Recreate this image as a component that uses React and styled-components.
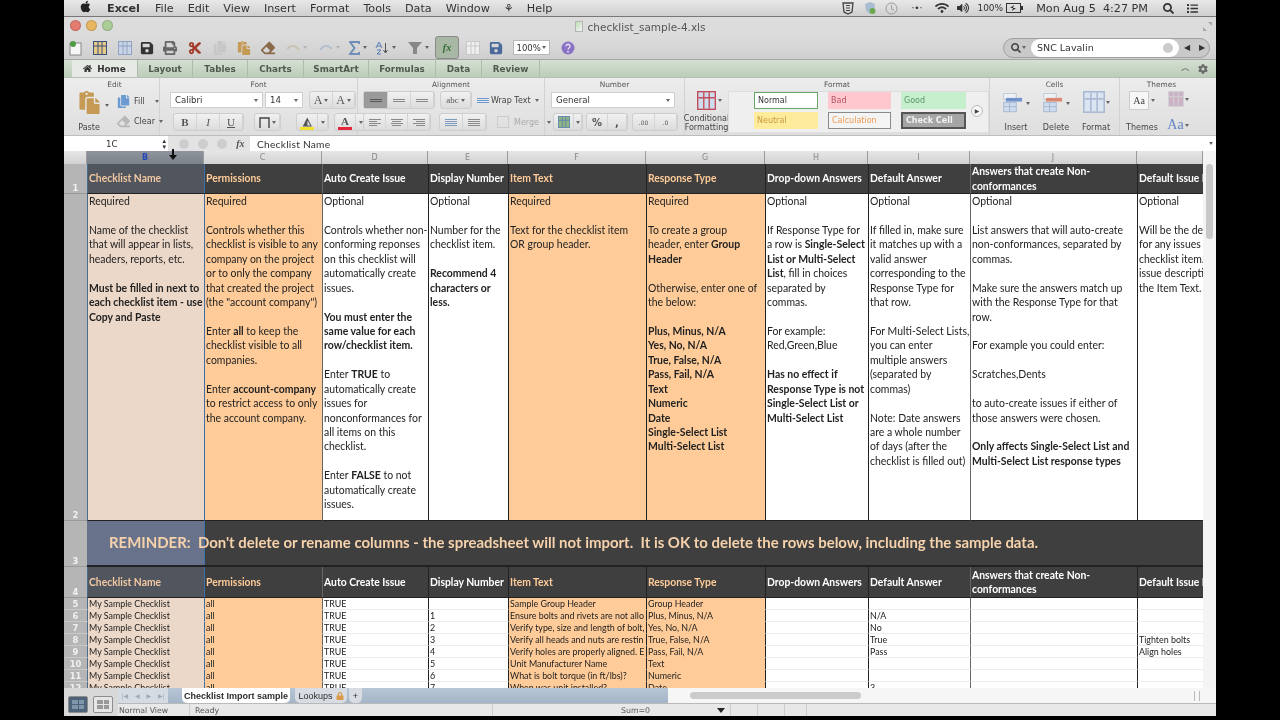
import React from "react";
import styled, { createGlobalStyle } from "styled-components";
import { FaApple, FaHome, FaSave, FaPrint, FaCut, FaCopy, FaPaste, FaCog, FaWifi, FaVolumeUp, FaSearch, FaList, FaLock, FaEraser } from "react-icons/fa";

const GlobalStyle = createGlobalStyle`
  html, body {
    margin: 0;
    height: 100%;
    background: #000;
    overflow: hidden;
  }
`;

const COLUMNS = "23px 117px 118px 106px 80px 138px 119px 103px 102px 167px 66px";
const UI_FONT = `"DejaVu Sans", sans-serif`;
const SHEET_FONT = `Lato, "Open Sans", sans-serif`;

const Page = styled.div`
  display: flex;
  justify-content: center;
  width: 1280px;
  height: 720px;
  background: #000;
`;

const Window = styled.div`
  position: relative;
  display: flex;
  flex-direction: column;
  width: 1152px;
  height: 716px;
  background: #e4e4e4;
  overflow: hidden;
  filter: blur(0.4px);
`;

const MenuBar = styled.div`
  display: flex;
  align-items: center;
  height: 17px;
  flex: none;
  padding-left: 15px;
  background: linear-gradient(#e8e8e8, #cfcfcf);
  border-bottom: 1px solid #777;
  box-sizing: border-box;
  font: 11.2px ${UI_FONT};
  color: #333;
`;

const MenuItem = styled.span`
  margin-right: ${(p) => p.$gap ?? 14}px;
  font-weight: ${(p) => (p.$bold ? 700 : 400)};
  white-space: nowrap;
`;

const MenuRight = styled.div`
  display: flex;
  align-items: center;
  margin-left: auto;
  padding-right: 18px;
  color: #333;
`;

const TitleBar = styled.div`
  position: relative;
  display: flex;
  align-items: center;
  justify-content: center;
  height: 19px;
  flex: none;
  background: #dcdcdc;
  font: 10.5px ${UI_FONT};
  color: #555;
`;

const Lights = styled.div`
  position: absolute;
  left: 6px;
  top: 3px;
  display: flex;
  gap: 5px;
`;

const Light = styled.span`
  width: 11px;
  height: 11px;
  border-radius: 50%;
  background: ${(p) => p.$color};
  border: 1px solid rgba(0, 0, 0, 0.15);
  box-sizing: border-box;
`;

const DocIcon = styled.span`
  width: 8px;
  height: 11px;
  margin-right: 5px;
  background: linear-gradient(135deg, #bfe0b8, #f4f4f4);
  border: 1px solid #b5b5b5;
  box-sizing: border-box;
`;

const ResizeIcon = styled.span`
  position: absolute;
  right: 3px;
  top: 4px;
  display: flex;
`;

const Toolbar = styled.div`
  display: flex;
  align-items: center;
  height: 24px;
  flex: none;
  background: linear-gradient(#dcdcdc, #cfcfcf);
  border-bottom: 1px solid #a5a5a5;
  box-sizing: border-box;
`;

const Tool = styled.div`
  display: flex;
  align-items: center;
  justify-content: center;
  gap: 3px;
  width: ${(p) => p.$w}px;
  flex: none;
  color: ${(p) => p.$color || "#555"};
  opacity: ${(p) => (p.$faded ? 0.3 : 1)};
`;

const FxToggle = styled.div`
  display: flex;
  align-items: center;
  justify-content: center;
  width: 24px;
  height: 21px;
  margin: 0 2px 0 0;
  border: 1px solid #8a8a8a;
  border-radius: 3px;
  background: #a9b8a5;
  font: italic 700 10px "Liberation Serif", serif;
  color: #2f6a33;
`;

const ZoomBox = styled.div`
  display: flex;
  align-items: center;
  justify-content: space-between;
  width: 37px;
  height: 15px;
  padding: 0 3px;
  box-sizing: border-box;
  background: #fff;
  border: 1px solid #b8b8b8;
  font: 8.5px ${UI_FONT};
  color: #333;
`;

const SearchPill = styled.div`
  display: flex;
  align-items: center;
  height: 20px;
  width: 207px;
  margin-left: auto;
  margin-right: 6px;
  padding-left: 7px;
  box-sizing: border-box;
  border: 1px solid #a0a0a0;
  border-radius: 10px;
  background: #c9c9c9;
  color: #444;
`;

const SearchInput = styled.div`
  display: flex;
  align-items: center;
  justify-content: space-between;
  flex: 1;
  height: 18px;
  margin-left: 4px;
  padding: 0 6px;
  box-sizing: border-box;
  border-radius: 9px;
  background: #fff;
  font: 9.5px ${UI_FONT};
  color: #333;
`;

const ClearDot = styled.span`
  width: 10px;
  height: 10px;
  border-radius: 50%;
  background: #ccc;
`;

const PagerArrow = styled.span`
  width: 15px;
  text-align: center;
  font-size: 8px;
  color: #333;
`;

const TabStrip = styled.div`
  display: flex;
  align-items: stretch;
  height: 18px;
  flex: none;
  padding-left: 8px;
  background: linear-gradient(#d5e0d2, #bccdb9);
  border-bottom: 1px solid #b5c2b3;
  box-sizing: border-box;
  font: 700 8.8px ${UI_FONT};
  color: #4e5a4e;
`;

const RibbonTab = styled.div`
  display: flex;
  align-items: center;
  justify-content: center;
  gap: 5px;
  width: ${(p) => p.$w}px;
  flex: none;
  box-sizing: border-box;
  border-right: 1px solid #aebcab;
  background: ${(p) => (p.$active ? "linear-gradient(#e4ebe2,#e8e8e8)" : "transparent")};
  color: ${(p) => (p.$active ? "#333" : "#4e5a4e")};
`;

const StripRight = styled.div`
  display: flex;
  align-items: center;
  gap: 8px;
  margin-left: auto;
  padding-right: 8px;
  color: #6a6a6a;
  font-size: 9px;
`;

const Ribbon = styled.div`
  display: flex;
  height: 58px;
  flex: none;
  padding-left: 6px;
  background: linear-gradient(#ececec, #dedede);
  border-bottom: 1px solid #bdbdbd;
  box-sizing: border-box;
  font: 8px ${UI_FONT};
  color: #444;
`;

const Group = styled.div`
  display: flex;
  flex-direction: column;
  width: ${(p) => p.$w}px;
  flex: none;
  border-right: 1px solid ${(p) => (p.$last ? "transparent" : "#d2d2d2")};
  box-sizing: border-box;
`;

const GroupTitle = styled.div`
  height: 13px;
  line-height: 13px;
  text-align: center;
  font-size: 7.4px;
  color: #555;
`;

const GroupRows = styled.div`
  display: flex;
  flex-direction: column;
  gap: 4px;
  padding-left: ${(p) => p.$pad ?? 0}px;
`;

const GroupColumns = styled.div`
  display: flex;
  gap: ${(p) => p.$gap ?? 0}px;
  padding-left: ${(p) => p.$pad ?? 0}px;
`;

const RibbonRow = styled.div`
  display: flex;
  align-items: center;
  gap: ${(p) => p.$gap ?? 0}px;
  height: 18px;
  padding-left: ${(p) => p.$pad ?? 0}px;
`;

const EditRow = styled.div`
  display: flex;
  height: 41px;
  padding-left: 3px;
`;

const PasteCaret = styled.div`
  display: flex;
  align-items: center;
  margin-top: -12px;
`;

const FillStack = styled.div`
  display: flex;
  flex-direction: column;
  justify-content: space-around;
  margin-left: 8px;
`;

const Combo = styled.div`
  display: flex;
  align-items: center;
  justify-content: space-between;
  width: ${(p) => p.$w}px;
  height: 16px;
  margin-left: ${(p) => p.$ml ?? 0}px;
  padding: 0 4px;
  box-sizing: border-box;
  background: #fff;
  border: 1px solid #cfcfcf;
  color: #333;
  font-size: 8.6px;
`;

const Caret = styled.span`
  width: 0;
  height: 0;
  flex: none;
  margin: 0 ${(p) => p.$m ?? 0}px;
  border-left: 2.5px solid transparent;
  border-right: 2.5px solid transparent;
  border-top: 3px solid #666;
`;

const Segments = styled.div`
  display: flex;
  height: 18px;
  flex: none;
  margin-left: ${(p) => p.$ml ?? 0}px;
  border: 1px solid #cecece;
  border-radius: 3px;
  background: linear-gradient(#f1f1f1, #dcdcdc);
  box-sizing: border-box;
`;

const Segment = styled.div`
  display: flex;
  align-items: center;
  justify-content: center;
  gap: 2px;
  width: ${(p) => p.$w}px;
  border-right: 1px solid #d4d4d4;
  background: ${(p) => (p.$pressed ? "#9a9a9a" : "transparent")};
  color: ${(p) => (p.$muted ? "#aaa" : "#555")};
  font: ${(p) => p.$font || `8.6px ${UI_FONT}`};
`;

const Lines = styled.span`
  display: flex;
  flex-direction: column;
  align-items: ${(p) => p.$align || "center"};
  gap: 1px;
  width: 12px;

  i {
    display: block;
    height: 1px;
    background: ${(p) => p.$color || "#8a8a8a"};
    width: 100%;
  }
  i:nth-child(even) {
    width: ${(p) => (p.$even ? "100%" : "70%")};
  }
`;

const ColorA = styled.span`
  display: flex;
  justify-content: center;
  width: 14px;
  font: 700 11px "Liberation Serif", serif;
  line-height: 12px;
  color: #555;
  border-bottom: 3px solid ${(p) => p.$bar};
`;

const LabelButton = styled.div`
  display: flex;
  align-items: center;
  gap: ${(p) => p.$gap ?? 4}px;
  margin-left: ${(p) => p.$ml ?? 0}px;
  color: ${(p) => (p.$muted ? "#aaa" : "#444")};
`;

const IconColumn = styled.div`
  display: flex;
  flex-direction: column;
  align-items: center;
  justify-content: space-between;
  width: ${(p) => p.$w}px;
  height: 41px;
  flex: none;
  line-height: 9px;
  text-align: center;
  white-space: nowrap;
`;

const IconWithCaret = styled.div`
  display: flex;
  align-items: center;
  gap: ${(p) => p.$gap ?? 1}px;
  padding-left: ${(p) => p.$pad ?? 0}px;
`;

const ThemeSwatch = styled.span`
  padding: 3px;
  background: #f7f7f7;
  border: 1px solid #ccc;
  font: 10px "Liberation Serif", serif;
`;

const ThemeFont = styled.div`
  display: flex;
  align-items: center;
  gap: 1px;
  font: 14px/14px "Liberation Serif", serif;
  color: #5f84c4;
`;

const Gallery = styled.div`
  position: relative;
  display: grid;
  grid-template-columns: 64px 63px 65px;
  grid-template-rows: 17px 17px;
  gap: 3px 10px;
  align-content: start;
  width: 262px;
  height: 41px;
  padding: 0 0 0 25px;
  box-sizing: border-box;
  background: #efefef;
  border: 1px solid #dcdcdc;
  border-bottom: none;
`;

const StyleChip = styled.div`
  display: flex;
  align-items: center;
  padding-left: 3px;
  font-size: 8px;
  box-sizing: border-box;
  background: ${(p) => p.$bg};
  color: ${(p) => p.$fg};
  border: ${(p) => p.$border || "none"};
  font-weight: ${(p) => (p.$bold ? 700 : 400)};
`;

const GalleryArrow = styled.span`
  position: absolute;
  right: 5px;
  top: 13px;
  width: 12px;
  height: 12px;
  border-radius: 50%;
  border: 1px solid #bbb;
  background: #f7f7f7;
  box-sizing: border-box;
  font-size: 6px;
  line-height: 10px;
  text-align: center;
`;

const FormulaBar = styled.div`
  display: flex;
  align-items: center;
  height: 15px;
  flex: none;
  background: #fff;
  font: 9.6px ${UI_FONT};
  color: #333;
`;

const NameBox = styled.div`
  display: flex;
  align-items: center;
  justify-content: space-between;
  width: 104px;
  height: 100%;
  padding: 0 2px 0 42px;
  box-sizing: border-box;
  flex: none;
  font-size: 8.6px;
`;

const Spinner = styled.span`
  font-size: 7px;
  line-height: 6px;
  text-align: center;
`;

const FormulaTools = styled.div`
  display: flex;
  align-items: center;
  justify-content: space-around;
  width: 82px;
  height: 100%;
  flex: none;
  padding: 0 1px 0 7px;
  box-sizing: border-box;
  background: #e3e3e3;
`;

const FormulaDot = styled.span`
  width: 10px;
  height: 10px;
  border-radius: 50%;
  background: #cdcdcd;
`;

const FxLabel = styled.span`
  font: italic 700 10px "Liberation Serif", serif;
  color: #555;
`;

const FormulaText = styled.div`
  flex: 1;
  padding-left: 7px;
  font: 10.2px ${SHEET_FONT};
  letter-spacing: 0.25px;
`;

const Sheet = styled.div`
  display: flex;
  flex: 1;
  min-height: 0;
`;

const Grid = styled.div`
  width: 1139px;
  flex: none;
  overflow: hidden;
  background: #fff;
`;

const Row = styled.div`
  display: grid;
  grid-template-columns: ${COLUMNS};
  height: ${(p) => p.$h}px;
`;

const ColumnHead = styled.div`
  display: flex;
  align-items: center;
  justify-content: center;
  background: ${(p) => (p.$selected ? "linear-gradient(#8f949c,#7c828c)" : "linear-gradient(#e6e6e6,#d2d2d2)")};
  border-right: 1px solid #9b9b9b;
  box-sizing: border-box;
  font: ${(p) => (p.$selected ? 700 : 400)} 8px ${UI_FONT};
  color: ${(p) => (p.$selected ? "#2a49b8" : "#888")};
`;

const RowHead = styled.div`
  display: flex;
  align-items: ${(p) => (p.$center ? "center" : "flex-end")};
  justify-content: center;
  background: #b5b5b5;
  border-bottom: 1px solid ${(p) => (p.$center ? "#c8c8c8" : "#9a9a9a")};
  box-sizing: border-box;
  font: 700 8.4px ${UI_FONT};
  color: #f1f1f1;
`;

const HeadCell = styled.div`
  display: flex;
  align-items: center;
  padding-left: 1px;
  box-sizing: border-box;
  overflow: hidden;
  background: ${(p) => (p.$selected ? "#50555e" : "#3f3f3f")};
  border-left: 1px solid ${(p) => p.$rule || "#222"};
  border-bottom: 1px solid #222;
  font: 700 10.35px/14.4px ${SHEET_FONT};
  color: ${(p) => (p.$orange ? (p.$selected ? "#f2c8a2" : "#fc9") : "#fff")};
  white-space: pre;
`;

const NoteCell = styled.div`
  padding-left: 1px;
  box-sizing: border-box;
  overflow: hidden;
  background: ${(p) => p.$bg};
  border-left: 1px solid ${(p) => p.$rule || "#222"};
  border-bottom: 1px solid #222;
  font: 10.45px/14.45px ${SHEET_FONT};
  color: #222;
  white-space: nowrap;
`;

const NoteLine = styled.div`
  height: 14.45px;
`;

const Reminder = styled.div`
  grid-column: 2 / -1;
  display: flex;
  align-items: center;
  padding: 0 0 2px 22px;
  background: linear-gradient(90deg, #68728a 117px, #3d6fa8 117px, #3d6fa8 118px, #3f3f3f 118px);
  border-bottom: 2px solid #222;
  box-sizing: border-box;
  font: 700 14.94px ${SHEET_FONT};
  color: #f6d2ac;
  white-space: pre;
`;

const DataCell = styled.div`
  padding-left: 1px;
  box-sizing: border-box;
  overflow: hidden;
  background: ${(p) => p.$bg};
  border-left: 1px solid ${(p) => p.$rule || "#222"};
  border-bottom: 1px solid ${(p) => (p.$bg === "#fff" ? "#ececec" : "transparent")};
  font: 8.9px/12px ${SHEET_FONT};
  color: #222;
  white-space: nowrap;
`;

const VScroll = styled.div`
  display: flex;
  flex-direction: column;
  align-items: center;
  flex: 1;
  padding-top: 13px;
  background: #f4f4f4;
`;

const VThumb = styled.div`
  width: 7px;
  height: 75px;
  border-radius: 4px;
  background: #c8c8c8;
`;

const Footer = styled.div`
  display: flex;
  height: 28px;
  flex: none;
  background: #e4e4e4;
  font: 7.8px ${UI_FONT};
  color: #555;
`;

const ViewSwitch = styled.div`
  display: flex;
  align-items: center;
  gap: 5px;
  width: 54px;
  padding: 5px 0 0 4px;
  box-sizing: border-box;
  flex: none;
  background: #d8d8d8;
`;

const ViewButton = styled.div`
  display: grid;
  grid-template-columns: 1fr 1fr;
  gap: 1px;
  width: ${(p) => p.$w}px;
  height: 17px;
  padding: 3px;
  box-sizing: border-box;
  border-radius: 2px;
  background: ${(p) => (p.$active ? "#4e6378" : "#e6e6e6")};
  border: 1px solid #8d8d8d;

  i {
    background: ${(p) => (p.$active ? "#7f95aa" : "#9a9a9a")};
  }
`;

const FooterMain = styled.div`
  display: flex;
  flex-direction: column;
  flex: 1;
  min-width: 0;
`;

const SheetTabs = styled.div`
  display: flex;
  height: 15px;
  flex: none;
`;

const TabRail = styled.div`
  display: flex;
  align-items: center;
  width: 550px;
  flex: none;
  background: linear-gradient(#b7c6d6, #a3b5c7);
`;

const RailNav = styled.div`
  display: flex;
  align-items: center;
  justify-content: space-around;
  width: 50px;
  height: 100%;
  flex: none;
  background: #d4dbe2;
  font-size: 6px;
  color: #a0a8b0;
`;

const SheetTab = styled.div`
  display: flex;
  align-items: center;
  justify-content: center;
  gap: 3px;
  width: ${(p) => p.$w}px;
  height: 100%;
  margin-left: ${(p) => p.$ml ?? 0}px;
  flex: none;
  background: ${(p) => (p.$active ? "#fff" : "#d7dde3")};
  border-radius: 0 0 5px 5px;
  font: ${(p) => (p.$active ? 700 : 400)} 9px "Liberation Sans", sans-serif;
  color: #2e2e2e;
  white-space: nowrap;
`;

const HScroll = styled.div`
  display: flex;
  align-items: center;
  flex: 1;
  padding: 0 16px 0 22px;
  background: #f6f6f6;
`;

const HThumb = styled.div`
  width: 171px;
  height: 7px;
  border-radius: 4px;
  background: #cbcbcb;
`;

const Grip = styled.span`
  width: 4px;
  height: 10px;
  margin-left: auto;
  border-left: 1px solid #bbb;
  border-right: 1px solid #bbb;
`;

const StatusBar = styled.div`
  display: flex;
  align-items: center;
  flex: 1;
  border-top: 1px solid #b9b9b9;
  box-sizing: border-box;
  background: #e8e8e8;
`;

const StatusCell = styled.div`
  display: flex;
  align-items: center;
  justify-content: space-between;
  width: ${(p) => p.$w}px;
  height: 100%;
  padding-left: ${(p) => p.$pad ?? 5}px;
  padding-right: ${(p) => p.$right ?? 0}px;
  flex: none;
  box-sizing: border-box;
  border-right: 1px solid #cdcdcd;
`;

const StatusCaret = styled.span`
  width: 0;
  height: 0;
  border-left: 4px solid transparent;
  border-right: 4px solid transparent;
  border-top: 5px solid #222;
`;

const CursorMark = styled.span`
  position: absolute;
  left: 105px;
  top: 149px;
  display: flex;
`;

const MenuStatus = styled.span`
  display: flex;
  margin-right: ${(p) => p.$gap}px;
  font-size: ${(p) => p.$size || "inherit"};
  white-space: nowrap;
`;

const menuLeft = ["File", "Edit", "View", "Insert", "Format", "Tools", "Data", "Window"];

const ribbonTabs = [
  ["Layout", 55], ["Tables", 55], ["Charts", 56], ["SmartArt", 65], ["Formulas", 67], ["Data", 46], ["Review", 58],
];

const columnLetters = ["B", "C", "D", "E", "F", "G", "H", "I", "J", ""];

const PEACH = "#fc9";
const TINT = "#ecd8c8";
const WHITE = "#fff";
const BLUE_RULE = "#3d6fa8";
const HEAVY_RULE = "#666";

// fill and left rule for each sheet column
const columns = [
  { bg: TINT, rule: "#4a6a92", orange: true, selected: true },
  { bg: PEACH, rule: BLUE_RULE, orange: true },
  { bg: WHITE, rule: HEAVY_RULE },
  { bg: WHITE },
  { bg: PEACH, orange: true },
  { bg: PEACH, orange: true },
  { bg: WHITE },
  { bg: WHITE },
  { bg: WHITE, rule: HEAVY_RULE },
  { bg: WHITE },
];

const headers = [
  "Checklist Name", "Permissions", "Auto Create Issue", "Display Number", "Item Text", "Response Type",
  "Drop-down Answers", "Default Answer", "Answers that create Non-\nconformances", "Default Issue D",
];

const B = ({ children }) => <b>{children}</b>;

const notes = [
  ["Required", "", "Name of the checklist", "that will appear in lists,", "headers, reports, etc.", "",
    <B>Must be filled in next to</B>, <B>each checklist item - use</B>, <B>Copy and Paste</B>],
  ["Required", "", "Controls whether this", "checklist is visible to any", "company on the project", "or to only the company",
    "that created the project", "(the \"account company\")", "", <>Enter <B>all</B> to keep the</>, "checklist visible to all", "companies.", "",
    <>Enter <B>account-company</B></>, "to restrict access to only", "the account company."],
  ["Optional", "", "Controls whether non-", "conforming reponses", "on this checklist will", "automatically create", "issues.", "",
    <B>You must enter the</B>, <B>same value for each</B>, <B>row/checklist item.</B>, "", <>Enter <B>TRUE</B> to</>, "automatically create",
    "issues for", "nonconformances for", "all items on this", "checklist.", "", <>Enter <B>FALSE</B> to not</>, "automatically create", "issues."],
  ["Optional", "", "Number for the", "checklist item.", "", <B>Recommend 4</B>, <B>characters or</B>, <B>less.</B>],
  ["Required", "", "Text for the checklist item", "OR group header."],
  ["Required", "", "To create a group", <>header, enter <B>Group</B></>, <B>Header</B>, "", "Otherwise, enter one of", "the below:", "",
    <B>Plus, Minus, N/A</B>, <B>Yes, No, N/A</B>, <B>True, False, N/A</B>, <B>Pass, Fail, N/A</B>, <B>Text</B>, <B>Numeric</B>, <B>Date</B>,
    <B>Single-Select List</B>, <B>Multi-Select List</B>],
  ["Optional", "", "If Response Type for", <>a row is <B>Single-Select</B></>, <B>List or Multi-Select</B>, <><B>List</B>, fill in choices</>,
    "separated by", "commas.", "", "For example:", "Red,Green,Blue", "", <B>Has no effect if</B>, <B>Response Type is not</B>,
    <B>Single-Select List or</B>, <B>Multi-Select List</B>],
  ["Optional", "", "If filled in, make sure", "it matches up with a", "valid answer", "corresponding to the", "Response Type for", "that row.", "",
    "For Multi-Select Lists,", "you can enter", "multiple answers", "(separated by", "commas)", "", "Note: Date answers", "are a whole number",
    "of days (after the", "checklist is filled out)"],
  ["Optional", "", "List answers that will auto-create", "non-conformances, separated by", "commas.", "", "Make sure the answers match up",
    "with the Response Type for that", "row.", "", "For example you could enter:", "", "Scratches,Dents", "", "to auto-create issues if either of",
    "those answers were chosen.", "", <B>Only affects Single-Select List and</B>, <B>Multi-Select List response types</B>],
  ["Optional", "", "Will be the de", "for any issues", "checklist item.", "issue descripti", "the Item Text."],
];

const dataRows = [
  [5, "", "Sample Group Header", "Group Header", "", ""],
  [6, "1", "Ensure bolts and rivets are not allo", "Plus, Minus, N/A", "N/A", ""],
  [7, "2", "Verify type, size and length of bolt,", "Yes, No, N/A", "No", ""],
  [8, "3", "Verify all heads and nuts are restin", "True, False, N/A", "True", "Tighten bolts"],
  [9, "4", "Verify holes are properly aligned. E", "Pass, Fail, N/A", "Pass", "Align holes"],
  [10, "5", "Unit Manufacturer Name", "Text", "", ""],
  [11, "6", "What is bolt torque (in ft/lbs)?", "Numeric", "", ""],
  [12, "7", "When was unit installed?", "Date", "3", ""],
];

const ColoredSquare = ({ colors, size = 14 }) => (
  <svg width={size} height={size} viewBox="0 0 14 14">
    <rect x="0.5" y="0.5" width="13" height="13" fill={colors[0]} stroke={colors[1]} />
    <path d="M1 5h12M5 1v12M9 1v12" stroke={colors[1]} fill="none" />
  </svg>
);

const ExcelSheetIcon = ({ accent = "#4b78c4", w = 30, h = 28 }) => (
  <svg width={w} height={h} viewBox="0 0 30 28">
    <rect x="1" y="1" width="17" height="8" fill="#eef1f6" stroke="#b8c0cc" />
    <rect x="1" y="13" width="17" height="13" fill="#cfdcee" stroke="#9aaec8" />
    <path d="M9 13v13M1 19h17" stroke="#9aaec8" />
    <rect x="4" y="7" width="22" height="5" fill={accent} opacity="0.75" />
  </svg>
);

const HeaderRow = ({ rowNumber, height }) => (
  <Row $h={height}>
    <RowHead>{rowNumber}</RowHead>
    {headers.map((text, i) => (
      <HeadCell key={i} $orange={columns[i].orange} $selected={columns[i].selected} $rule={columns[i].rule}>
        {text}
      </HeadCell>
    ))}
  </Row>
);

const App = () => {
  return (
    <Page>
      <GlobalStyle />
      <Window>
        <MenuBar>
          <MenuItem $gap={15}><FaApple size={13} color="#222" /></MenuItem>
          <MenuItem $bold $gap={15}>Excel</MenuItem>
          {menuLeft.map((label) => <MenuItem key={label}>{label}</MenuItem>)}
          <MenuItem $gap={13}>⚘</MenuItem>
          <MenuItem>Help</MenuItem>
          <MenuRight>
            <MenuStatus $gap={9}>
              <svg width="12" height="13" viewBox="0 0 12 13">
                <path d="M1 1h10l-1 9-4 2-4-2z" fill="none" stroke="#444" strokeWidth="1.3" />
                <path d="M4 3.5h4M4 6h4M4 8.5h4" stroke="#444" />
              </svg>
            </MenuStatus>
            <MenuStatus $gap={8}>
              <svg width="14" height="14" viewBox="0 0 14 14">
                <path d="M2 3l5-2 5 2-1 7-4 3-4-3z" fill="#a9bdd2" />
                <circle cx="9.5" cy="10" r="3" fill="#6aa84f" />
              </svg>
            </MenuStatus>
            <MenuStatus $gap={13}>
              <svg width="13" height="13" viewBox="0 0 13 13">
                <circle cx="6.5" cy="6.5" r="5.5" fill="none" stroke="#999" />
                <path d="M6.5 3v4l2.5 1" fill="none" stroke="#999" />
              </svg>
            </MenuStatus>
            <MenuStatus $gap={13} $size="9px">·•·</MenuStatus>
            <MenuStatus $gap={8}><FaWifi size={14} /></MenuStatus>
            <MenuStatus $gap={8}><FaVolumeUp size={12} /></MenuStatus>
            <MenuStatus $gap={3} $size="9px">100%</MenuStatus>
            <MenuStatus $gap={13}>
              <svg width="17" height="10" viewBox="0 0 17 10">
                <rect x="0.5" y="0.5" width="14" height="9" fill="none" stroke="#333" />
                <rect x="15" y="3" width="2" height="4" fill="#333" />
                <path d="M8 2l-4 3h3l-1 3 4-3H7z" fill="#333" />
              </svg>
            </MenuStatus>
            <MenuStatus $gap={15}>Mon Aug 5&nbsp; 4:27 PM</MenuStatus>
            <MenuStatus $gap={13}><FaSearch size={11} /></MenuStatus>
            <FaList size={11} />
          </MenuRight>
        </MenuBar>

        <TitleBar>
          <Lights>
            <Light $color="#e47b70" />
            <Light $color="#e8b661" />
            <Light $color="#aacd98" />
          </Lights>
          <DocIcon />
          checklist_sample-4.xls
          <ResizeIcon>
            <svg width="11" height="11" viewBox="0 0 11 11">
              <path d="M6 1h4v4zM1 6v4h4z" fill="#a8a8a8" />
            </svg>
          </ResizeIcon>
        </TitleBar>

        <Toolbar>
          <Tool $w={23}>
            <svg width="14" height="16" viewBox="0 0 14 16">
              <rect x="1" y="3" width="11" height="12" fill="#f6f6f6" stroke="#888" />
              <circle cx="4" cy="4" r="3" fill="#4f9c43" />
            </svg>
          </Tool>
          <Tool $w={26}><ColoredSquare colors={["#e6c982", "#3b4f80"]} /></Tool>
          <Tool $w={23}><ColoredSquare colors={["#c9d5e6", "#8ea3c2"]} /></Tool>
          <Tool $w={21} $color="#333"><FaSave size={14} /></Tool>
          <Tool $w={25} $color="#666"><FaPrint size={14} /></Tool>
          <Tool $w={26} $color="#a33b2a"><FaCut size={14} /></Tool>
          <Tool $w={24} $color="#c7c7c7"><FaCopy size={14} /></Tool>
          <Tool $w={23} $color="#c59a55"><FaPaste size={14} /></Tool>
          <Tool $w={25} $color="#8a6a4a"><FaEraser size={14} /></Tool>
          <Tool $w={33} $faded $color="#b5945a"><svg width="14" height="10" viewBox="0 0 14 10"><path d="M1 6q6-7 12 1" fill="none" stroke="currentColor" strokeWidth="2" /></svg><Caret /></Tool>
          <Tool $w={33} $faded $color="#6a8ec0"><svg width="14" height="10" viewBox="0 0 14 10"><path d="M13 6Q7-1 1 7" fill="none" stroke="currentColor" strokeWidth="2" /></svg><Caret /></Tool>
          <Tool $w={24} $color="#6f8fb8"><svg width="11" height="14" viewBox="0 0 11 14"><path d="M10 3V1H1l4.5 6L1 13h9v-2" fill="none" stroke="currentColor" strokeWidth="2" /></svg><Caret /></Tool>
          <Tool $w={31} $color="#5a7fb5"><svg width="14" height="14" viewBox="0 0 14 14"><path d="M1 7l3-6 3 6M2 5h4M2 9h4l-4 4h4" fill="none" stroke="currentColor" /><path d="M10.5 2v10M8.5 9l2 3 2-3" fill="none" stroke="#555" /></svg><Caret /></Tool>
          <Tool $w={34} $color="#888">
            <svg width="14" height="12" viewBox="0 0 14 12"><path d="M0 0h14L9 6v6H5V6z" fill="currentColor" /></svg>
            <Caret />
          </Tool>
          <Tool $w={26}><FxToggle>fx</FxToggle></Tool>
          <Tool $w={23}><ColoredSquare colors={["#efefef", "#c8c8c8"]} /></Tool>
          <Tool $w={24} $color="#4b6a9c"><FaSave size={14} /></Tool>
          <Tool $w={46}><ZoomBox>100%<Caret /></ZoomBox></Tool>
          <Tool $w={28}>
            <svg width="14" height="14" viewBox="0 0 14 14">
              <circle cx="7" cy="7" r="6.5" fill="#8a72c4" />
              <path d="M5 5.2a2 2 0 1 1 3 1.8c-.7.4-1 .8-1 1.6" fill="none" stroke="#e9e2f6" strokeWidth="1.4" />
              <circle cx="7" cy="10.7" r="0.9" fill="#e9e2f6" />
            </svg>
          </Tool>
          <SearchPill>
            <FaSearch size={10} />
            <Caret $m={1} />
            <SearchInput>SNC Lavalin<ClearDot /></SearchInput>
            <PagerArrow>◀</PagerArrow>
            <PagerArrow>▶</PagerArrow>
          </SearchPill>
        </Toolbar>

        <TabStrip>
          <RibbonTab $active $w={66}><FaHome size={9} />Home</RibbonTab>
          {ribbonTabs.map(([label, w]) => <RibbonTab key={label} $w={w}>{label}</RibbonTab>)}
          <StripRight>
            <span>︿</span>
            <FaCog size={10} />
          </StripRight>
        </TabStrip>

        <Ribbon>
          <Group $w={90}>
            <GroupTitle>Edit</GroupTitle>
            <EditRow>
              <IconColumn $w={32}>
                <FaPaste size={23} color="#c59a55" />
                Paste
              </IconColumn>
              <PasteCaret><Caret /></PasteCaret>
              <FillStack>
                <LabelButton><FaCopy size={13} color="#6c9bd2" />Fill<Caret $m={6} /></LabelButton>
                <LabelButton><FaEraser size={13} color="#b8b8b8" />Clear<Caret /></LabelButton>
              </FillStack>
            </EditRow>
          </Group>

          <Group $w={198}>
            <GroupTitle>Font</GroupTitle>
            <GroupRows $pad={10}>
              <RibbonRow>
                <Combo $w={93}>Calibri<Caret /></Combo>
                <Combo $w={38} $ml={2}>14<Caret /></Combo>
                <Segments $ml={6}>
                  <Segment $w={22} $font={`12px "Liberation Serif", serif`}>A<Caret /></Segment>
                  <Segment $w={21} $font={`12px "Liberation Serif", serif`}>A<Caret /></Segment>
                </Segments>
              </RibbonRow>
              <RibbonRow $pad={3}>
                <Segments>
                  <Segment $w={22} $font={`700 11px "Liberation Serif", serif`}>B</Segment>
                  <Segment $w={22} $font={`italic 11px "Liberation Serif", serif`}>I</Segment>
                  <Segment $w={22} $font={`11px "Liberation Serif", serif`}><u>U</u></Segment>
                </Segments>
                <Segments $ml={10}>
                  <Segment $w={24}>
                    <svg width="11" height="11" viewBox="0 0 11 11"><path d="M1 11V1h9v10" fill="none" stroke="#444" strokeWidth="1.4" /></svg>
                    <Caret />
                  </Segment>
                </Segments>
                <Segments $ml={15}>
                  <Segment $w={20}><ColorA $bar="#f2e22c">◭</ColorA></Segment>
                  <Segment $w={9}><Caret /></Segment>
                </Segments>
                <Segments $ml={5}>
                  <Segment $w={20}><ColorA $bar="#e3263a">A</ColorA></Segment>
                  <Segment $w={9}><Caret /></Segment>
                </Segments>
              </RibbonRow>
            </GroupRows>
          </Group>

          <Group $w={187}>
            <GroupTitle>Alignment</GroupTitle>
            <GroupRows $pad={5}>
              <RibbonRow>
                <Segments>
                  <Segment $w={23} $pressed><Lines $even $color="#555"><i /><i /></Lines></Segment>
                  <Segment $w={22}><Lines $even><i /><i /></Lines></Segment>
                  <Segment $w={22}><Lines $even><i /><i /></Lines></Segment>
                </Segments>
                <Segments $ml={5}>
                  <Segment $w={29} $font={`9px "Liberation Serif", serif`}>abc<Caret /></Segment>
                </Segments>
                <LabelButton $ml={5} $gap={2}>
                  <Lines $even $color="#6c9bd2"><i /><i /><i /></Lines>
                  Wrap Text<Caret $m={2} />
                </LabelButton>
              </RibbonRow>
              <RibbonRow>
                <Segments>
                  <Segment $w={21}><Lines $align="flex-start"><i /><i /><i /><i /></Lines></Segment>
                  <Segment $w={21}><Lines><i /><i /><i /><i /></Lines></Segment>
                  <Segment $w={21}><Lines $align="flex-end"><i /><i /><i /><i /></Lines></Segment>
                </Segments>
                <Segments $ml={8}>
                  <Segment $w={22}><Lines $even $color="#7d9bc0"><i /><i /><i /><i /></Lines></Segment>
                  <Segment $w={22}><Lines $even><i /><i /><i /><i /></Lines></Segment>
                </Segments>
                <LabelButton $ml={10} $muted $gap={5}>
                  <svg width="12" height="12" viewBox="0 0 12 12"><rect x="0.5" y="0.5" width="11" height="11" fill="none" stroke="#ccc" /></svg>
                  Merge<Caret $m={3} />
                </LabelButton>
              </RibbonRow>
            </GroupRows>
          </Group>

          <Group $w={140}>
            <GroupTitle>Number</GroupTitle>
            <GroupRows $pad={6}>
              <RibbonRow><Combo $w={124}>General<Caret /></Combo></RibbonRow>
              <RibbonRow $pad={2}>
                <Segments>
                  <Segment $w={19}><ColoredSquare colors={["#8fb486", "#5f83ad"]} size={12} /></Segment>
                  <Segment $w={7}><Caret /></Segment>
                </Segments>
                <Segments $ml={3}>
                  <Segment $w={20} $font={`700 10px ${UI_FONT}`}>%</Segment>
                  <Segment $w={18} $font={`700 10px ${UI_FONT}`}>,</Segment>
                </Segments>
                <Segments $ml={4}>
                  <Segment $w={21} $font={`6px ${UI_FONT}`}>.00</Segment>
                  <Segment $w={21} $font={`6px ${UI_FONT}`}>.0</Segment>
                </Segments>
              </RibbonRow>
            </GroupRows>
          </Group>

          <Group $w={305}>
            <GroupTitle>Format</GroupTitle>
            <GroupColumns>
              <IconColumn $w={43}>
                <IconWithCaret $gap={2} $pad={6}>
                  <ColoredSquare colors={["#cfdcee", "#c24b5a"]} size={19} />
                  <Caret />
                </IconWithCaret>
                <span>Conditional<br />Formatting</span>
              </IconColumn>
              <Gallery>
                <StyleChip $bg="#fff" $fg="#333" $border="1px solid #6aa866">Normal</StyleChip>
                <StyleChip $bg="#ffc7ce" $fg="#b5535f">Bad</StyleChip>
                <StyleChip $bg="#c6efce" $fg="#5a9466">Good</StyleChip>
                <StyleChip $bg="#ffeb9c" $fg="#c79a3c">Neutral</StyleChip>
                <StyleChip $bg="#f4f4f4" $fg="#f09a52" $border="1px solid #8a8a8a">Calculation</StyleChip>
                <StyleChip $bg="#a5a5a5" $fg="#f2f2f2" $border="2px solid #555" $bold>Check Cell</StyleChip>
                <GalleryArrow>▶</GalleryArrow>
              </Gallery>
            </GroupColumns>
          </Group>

          <Group $w={130}>
            <GroupTitle>Cells</GroupTitle>
            <GroupColumns $pad={8} $gap={4}>
              <IconColumn $w={36}><IconWithCaret><ExcelSheetIcon w={22} h={24} /><Caret /></IconWithCaret>Insert</IconColumn>
              <IconColumn $w={36}><IconWithCaret><ExcelSheetIcon accent="#d8694c" w={22} h={24} /><Caret /></IconWithCaret>Delete</IconColumn>
              <IconColumn $w={36}><IconWithCaret><ColoredSquare colors={["#dbe5f2", "#a9bad2"]} size={22} /><Caret /></IconWithCaret>Format</IconColumn>
            </GroupColumns>
          </Group>

          <Group $w={84} $last>
            <GroupTitle>Themes</GroupTitle>
            <GroupColumns>
              <IconColumn $w={44}>
                <IconWithCaret $gap={2}>
                  <ThemeSwatch>Aa</ThemeSwatch>
                  <Caret />
                </IconWithCaret>
                Themes
              </IconColumn>
              <IconColumn $w={28}>
                <IconWithCaret>
                  <ColoredSquare colors={["#cbb0c6", "#d2d2d2"]} size={16} />
                  <Caret />
                </IconWithCaret>
                <ThemeFont>Aa<Caret /></ThemeFont>
              </IconColumn>
            </GroupColumns>
          </Group>
        </Ribbon>

        <FormulaBar>
          <NameBox>1C<Spinner>▴<br />▾</Spinner></NameBox>
          <FormulaTools>
            <FormulaDot />
            <FormulaDot />
            <FormulaDot />
            <FxLabel>fx</FxLabel>
          </FormulaTools>
          <FormulaText>Checklist Name</FormulaText>
          <Caret $m={3} />
        </FormulaBar>

        <Sheet>
          <Grid>
            <Row $h={13}>
              <ColumnHead />
              {columnLetters.map((letter, i) => (
                <ColumnHead key={i} $selected={i === 0}>{letter}</ColumnHead>
              ))}
            </Row>
            <HeaderRow rowNumber={1} height={30} />
            <Row $h={327}>
              <RowHead>2</RowHead>
              {notes.map((lines, i) => (
                <NoteCell key={i} $bg={columns[i].bg} $rule={columns[i].rule}>
                  {lines.map((line, j) => <NoteLine key={j}>{line}</NoteLine>)}
                </NoteCell>
              ))}
            </Row>
            <Row $h={46}>
              <RowHead>3</RowHead>
              <Reminder>REMINDER:  Don't delete or rename columns - the spreadsheet will not import.  It is OK to delete the rows below, including the sample data.</Reminder>
            </Row>
            <HeaderRow rowNumber={4} height={31} />
            {dataRows.map(([num, display, item, response, answer, issue]) => {
              const values = ["My Sample Checklist", "all", "TRUE", display, item, response, "", answer, "", issue];
              return (
                <Row key={num} $h={12}>
                  <RowHead $center>{num}</RowHead>
                  {values.map((value, i) => (
                    <DataCell key={i} $bg={columns[i].bg} $rule={columns[i].rule}>{value}</DataCell>
                  ))}
                </Row>
              );
            })}
          </Grid>
          <VScroll><VThumb /></VScroll>
        </Sheet>

        <Footer>
          <ViewSwitch>
            <ViewButton $active $w={20}><i /><i /><i /><i /></ViewButton>
            <ViewButton $w={20}><i /><i /><i /><i /></ViewButton>
          </ViewSwitch>
          <FooterMain>
            <SheetTabs>
              <TabRail>
                <RailNav><span>|◀</span><span>◀</span><span>▶</span><span>▶|</span></RailNav>
                <SheetTab $active $w={108} $ml={14}>Checklist Import sample</SheetTab>
                <SheetTab $w={52} $ml={5}>Lookups<FaLock size={8} color="#d99a4a" /></SheetTab>
                <SheetTab $w={13} $ml={2}>+</SheetTab>
              </TabRail>
              <HScroll><HThumb /><Grip /></HScroll>
            </SheetTabs>
            <StatusBar>
              <StatusCell $w={72} $pad={1}>Normal View</StatusCell>
              <StatusCell $w={303}>Ready</StatusCell>
              <StatusCell $w={238} $pad={128} $right={5}>Sum=0<StatusCaret /></StatusCell>
              <StatusCell $w={27} />
              <StatusCell $w={27} />
              <StatusCell $w={22} />
            </StatusBar>
          </FooterMain>
        </Footer>

        <CursorMark>
          <svg width="8" height="11" viewBox="0 0 8 11"><path d="M3 0h2v6h3l-4 5-4-5h3z" fill="#111" /></svg>
        </CursorMark>
      </Window>
    </Page>
  );
};

export default App;
